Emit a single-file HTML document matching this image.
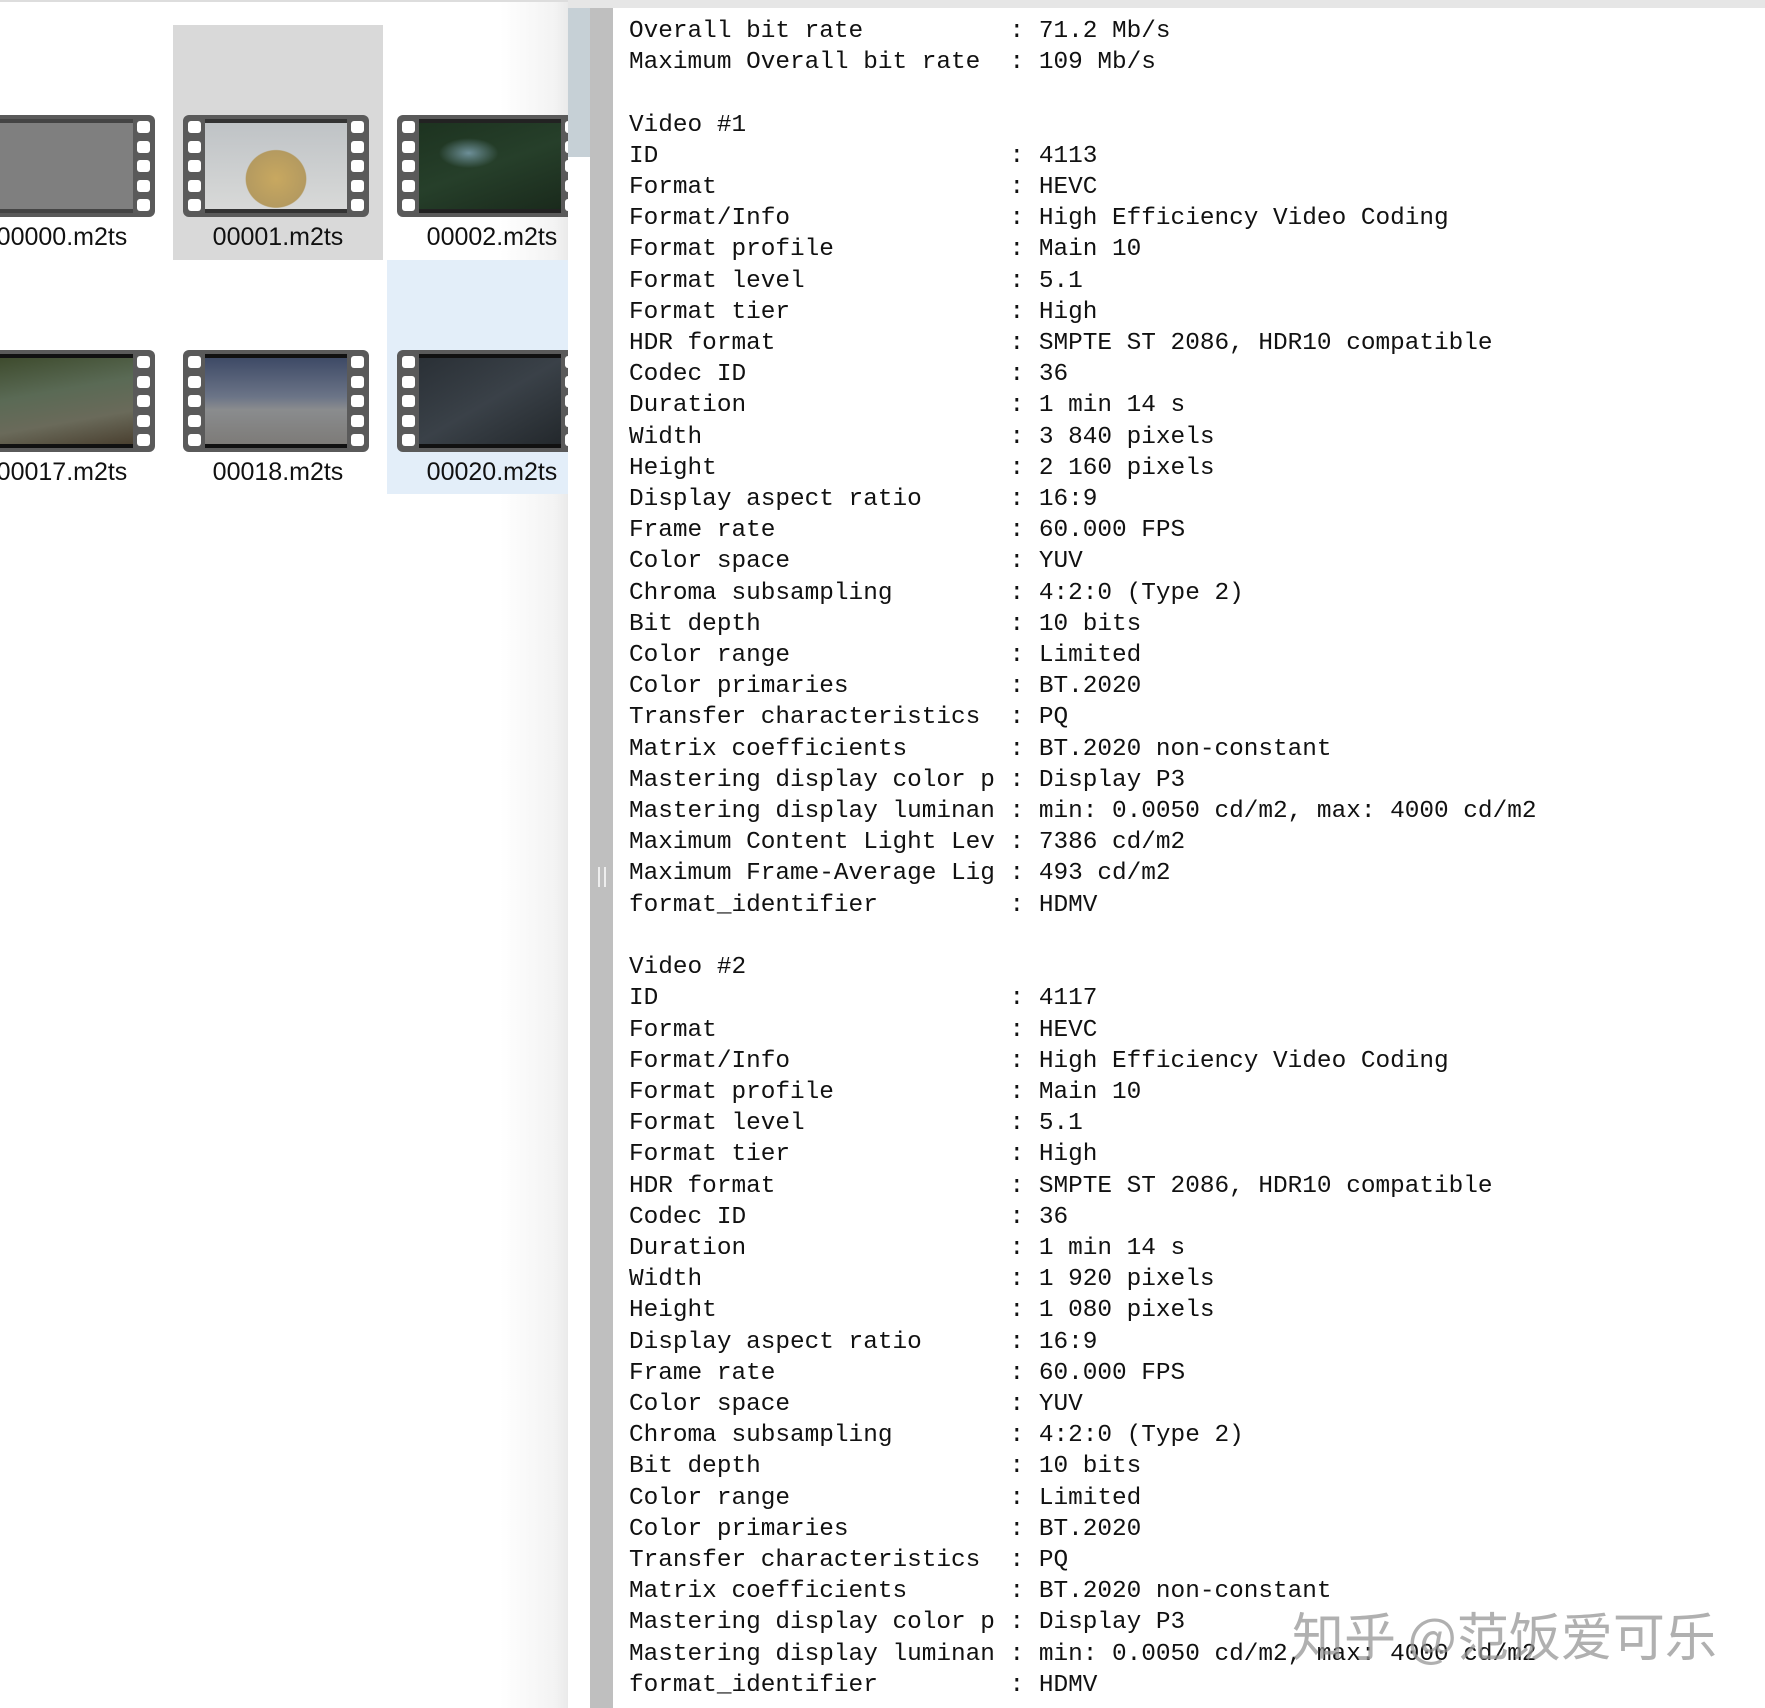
<!DOCTYPE html>
<html><head><meta charset="utf-8">
<style>
*{margin:0;padding:0;box-sizing:border-box}
html,body{width:1765px;height:1708px;overflow:hidden;background:#fff}
#left{position:absolute;left:0;top:0;width:568px;height:1708px;background:linear-gradient(to right,#fff 0,#fff 500px,#f3f3f3 555px,#eaeaea 568px);border-top:2px solid #ddd;overflow:hidden}
.sel{position:absolute}
.strip{position:absolute;width:186px;height:102px;background:#5a5a5a;border-radius:6px}
.strip .hl,.strip .hr{position:absolute;top:6px;width:13px;height:90px}
.strip .hl{left:5px}.strip .hr{right:5px}
.hole{width:13px;height:12px;background:#fff;border-radius:3px;margin-bottom:7.5px}
.pic{position:absolute;left:22px;right:22px;top:4px;bottom:4px;border-top:4px solid #222;border-bottom:4px solid #222}
.lbl{position:absolute;width:214px;text-align:center;font:25px "Liberation Sans","DejaVu Sans",sans-serif;color:#111}
#topbar{position:absolute;left:568px;top:0;width:1197px;height:8px;background:#e6e6e6}
#bluestrip{position:absolute;left:568px;top:8px;width:22px;height:149px;background:#c6d0d6}
#graybar{position:absolute;left:590px;top:8px;width:23px;height:1700px;background:#bfbfbf}
#grip{position:absolute;left:598px;top:867px;width:8px;height:20px;border-left:2px solid #eee;border-right:2px solid #eee}
pre{position:absolute;left:629px;top:16px;font:24.4px/31.2px "Liberation Mono","DejaVu Sans Mono",monospace;color:#111}
#wm{position:absolute;left:1292px;top:1608px;font:52px/1 "Noto Sans CJK SC","WenQuanYi Zen Hei",sans-serif;color:rgba(150,150,150,.75);white-space:nowrap}
</style></head><body>
<div id="left">
  <div class="sel" style="left:173px;top:23px;width:210px;height:235px;background:#d9d9d9"></div>
  <div class="sel" style="left:387px;top:258px;width:181px;height:234px;background:#e3eef9"></div>

  <div class="strip" style="left:-31px;top:113px"><div class="hl"><div class="hole"></div><div class="hole"></div><div class="hole"></div><div class="hole"></div><div class="hole"></div></div><div class="pic" style="background:#7f7f7f;border-color:#444"></div><div class="hr"><div class="hole"></div><div class="hole"></div><div class="hole"></div><div class="hole"></div><div class="hole"></div></div></div>
  <div class="strip" style="left:183px;top:113px"><div class="hl"><div class="hole"></div><div class="hole"></div><div class="hole"></div><div class="hole"></div><div class="hole"></div></div><div class="pic" style="background:radial-gradient(ellipse 35% 55% at 50% 65%,#c8a860 0,#b49a60 60%,transparent 62%),linear-gradient(#bfc3c6,#d8d9d8);border-color:#333"></div><div class="hr"><div class="hole"></div><div class="hole"></div><div class="hole"></div><div class="hole"></div><div class="hole"></div></div></div>
  <div class="strip" style="left:397px;top:113px"><div class="hl"><div class="hole"></div><div class="hole"></div><div class="hole"></div><div class="hole"></div><div class="hole"></div></div><div class="pic" style="background:radial-gradient(ellipse 30% 25% at 35% 35%,#6d8f98 0,transparent 70%),linear-gradient(160deg,#1d3320,#263f2a 50%,#1a2a1c);border-color:#222"></div><div class="hr"><div class="hole"></div><div class="hole"></div><div class="hole"></div><div class="hole"></div><div class="hole"></div></div></div>
  <div class="lbl" style="left:-45px;top:221px">00000.m2ts</div>
  <div class="lbl" style="left:171px;top:221px">00001.m2ts</div>
  <div class="lbl" style="left:385px;top:221px">00002.m2ts</div>

  <div class="strip" style="left:-31px;top:348px"><div class="hl"><div class="hole"></div><div class="hole"></div><div class="hole"></div><div class="hole"></div><div class="hole"></div></div><div class="pic" style="background:linear-gradient(170deg,#3d4a2c,#5a6a55 40%,#6a6a5a 70%,#4a4030);border-color:#111"></div><div class="hr"><div class="hole"></div><div class="hole"></div><div class="hole"></div><div class="hole"></div><div class="hole"></div></div></div>
  <div class="strip" style="left:183px;top:348px"><div class="hl"><div class="hole"></div><div class="hole"></div><div class="hole"></div><div class="hole"></div><div class="hole"></div></div><div class="pic" style="background:linear-gradient(#3e4a66,#6b7487 45%,#8a8c8e 60%,#7d7b78);border-color:#111"></div><div class="hr"><div class="hole"></div><div class="hole"></div><div class="hole"></div><div class="hole"></div><div class="hole"></div></div></div>
  <div class="strip" style="left:397px;top:348px"><div class="hl"><div class="hole"></div><div class="hole"></div><div class="hole"></div><div class="hole"></div><div class="hole"></div></div><div class="pic" style="background:linear-gradient(150deg,#2a3036,#3a4148 50%,#23282c);border-color:#111"></div><div class="hr"><div class="hole"></div><div class="hole"></div><div class="hole"></div><div class="hole"></div><div class="hole"></div></div></div>
  <div class="lbl" style="left:-45px;top:456px">00017.m2ts</div>
  <div class="lbl" style="left:171px;top:456px">00018.m2ts</div>
  <div class="lbl" style="left:385px;top:456px">00020.m2ts</div>
</div>
<div id="topbar"></div>
<div id="bluestrip"></div>
<div id="graybar"></div>
<div id="grip"></div>
<pre>Overall bit rate          : 71.2 Mb/s
Maximum Overall bit rate  : 109 Mb/s

Video #1
ID                        : 4113
Format                    : HEVC
Format/Info               : High Efficiency Video Coding
Format profile            : Main 10
Format level              : 5.1
Format tier               : High
HDR format                : SMPTE ST 2086, HDR10 compatible
Codec ID                  : 36
Duration                  : 1 min 14 s
Width                     : 3 840 pixels
Height                    : 2 160 pixels
Display aspect ratio      : 16:9
Frame rate                : 60.000 FPS
Color space               : YUV
Chroma subsampling        : 4:2:0 (Type 2)
Bit depth                 : 10 bits
Color range               : Limited
Color primaries           : BT.2020
Transfer characteristics  : PQ
Matrix coefficients       : BT.2020 non-constant
Mastering display color p : Display P3
Mastering display luminan : min: 0.0050 cd/m2, max: 4000 cd/m2
Maximum Content Light Lev : 7386 cd/m2
Maximum Frame-Average Lig : 493 cd/m2
format_identifier         : HDMV

Video #2
ID                        : 4117
Format                    : HEVC
Format/Info               : High Efficiency Video Coding
Format profile            : Main 10
Format level              : 5.1
Format tier               : High
HDR format                : SMPTE ST 2086, HDR10 compatible
Codec ID                  : 36
Duration                  : 1 min 14 s
Width                     : 1 920 pixels
Height                    : 1 080 pixels
Display aspect ratio      : 16:9
Frame rate                : 60.000 FPS
Color space               : YUV
Chroma subsampling        : 4:2:0 (Type 2)
Bit depth                 : 10 bits
Color range               : Limited
Color primaries           : BT.2020
Transfer characteristics  : PQ
Matrix coefficients       : BT.2020 non-constant
Mastering display color p : Display P3
Mastering display luminan : min: 0.0050 cd/m2, max: 4000 cd/m2
format_identifier         : HDMV</pre>
<div id="wm">知乎 @范饭爱可乐</div>
</body></html>
